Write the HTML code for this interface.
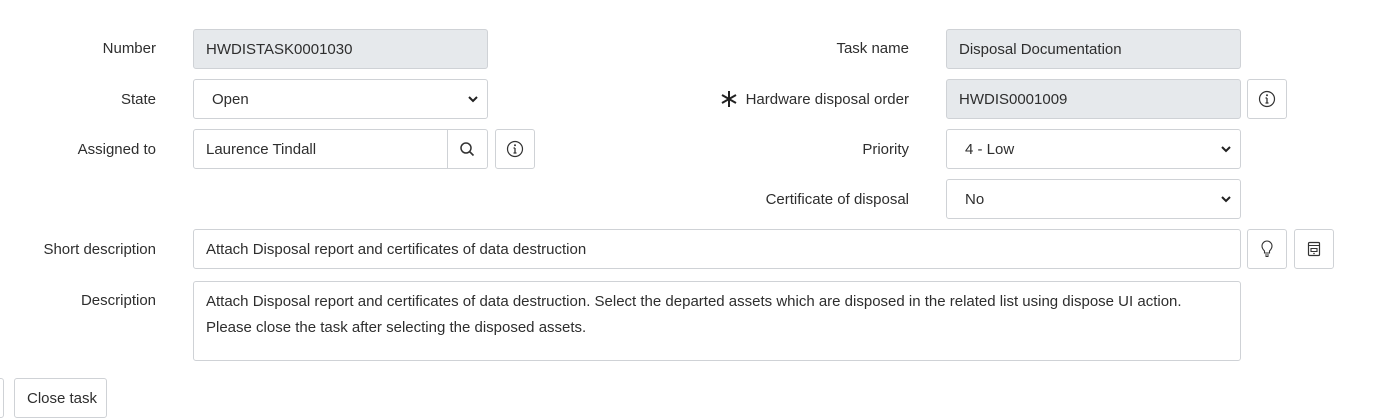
<!DOCTYPE html>
<html><head><meta charset="utf-8"><style>
body{margin:0;width:1380px;height:404px;overflow:hidden;background:#fff;font-family:"Liberation Sans",sans-serif;font-size:15px;color:#2e2e2e;position:relative}
.l{position:absolute;text-align:right;line-height:20px;margin-top:1px}
.b{position:absolute;box-sizing:border-box;border:1px solid #cfd2d6;border-radius:3px;background:#fff;line-height:40px;padding-left:12px;white-space:nowrap}
.ro{background:#e6e9ec}
.ic{position:absolute;box-sizing:border-box;border:1px solid #cfd2d6;border-radius:3px;background:#fff;width:40px;height:40px;display:flex;align-items:center;justify-content:center}
.chev{position:absolute;right:8px;top:14px}
</style></head><body>
<div class="l" style="left:0;width:156px;top:38px">Number</div>
<div class="b ro" style="left:193px;top:29px;width:295px;height:40px">HWDISTASK0001030</div>
<div class="l" style="left:0;width:156px;top:89px">State</div>
<div class="b" style="left:193px;top:79px;width:295px;height:40px;padding-left:18px">Open<svg class="chev" width="12" height="10" viewBox="0 0 12 10"><path d="M2 3l4 4 4-4" fill="none" stroke="#222" stroke-width="2"/></svg></div>
<div class="l" style="left:0;width:156px;top:139px">Assigned to</div>
<div class="b" style="left:193px;top:129px;width:295px;height:40px">Laurence Tindall</div>
<div style="position:absolute;left:447px;top:130px;width:1px;height:38px;background:#cfd2d6"></div>
<svg style="position:absolute;left:459px;top:141px" width="17" height="17" viewBox="0 0 17 17"><circle cx="7" cy="7" r="5" fill="none" stroke="#333" stroke-width="1.5"/><path d="M10.5 10.5l4 4" stroke="#333" stroke-width="1.6"/></svg>
<div class="ic" style="left:495px;top:129px"><svg width="18" height="18" viewBox="0 0 18 18"><circle cx="9" cy="9" r="7.5" fill="none" stroke="#333" stroke-width="1.2"/><path d="M9 8v5M7.5 8H9M7.5 13h3" stroke="#333" stroke-width="1.3" fill="none"/><circle cx="9" cy="5.3" r="1" fill="#333"/></svg></div>

<div class="l" style="left:700px;width:209px;top:38px">Task name</div>
<div class="b ro" style="left:946px;top:29px;width:295px;height:40px">Disposal Documentation</div>
<div class="l" style="left:600px;width:309px;top:89px"><svg width="18" height="18" viewBox="0 0 18 18" style="vertical-align:-4px;margin-right:8px"><path d="M9 1v16M2 5l14 8M16 5L2 13" stroke="#222" stroke-width="2"/></svg>Hardware disposal order</div>
<div class="b ro" style="left:946px;top:79px;width:295px;height:40px">HWDIS0001009</div>
<div class="ic" style="left:1247px;top:79px"><svg width="18" height="18" viewBox="0 0 18 18"><circle cx="9" cy="9" r="7.5" fill="none" stroke="#333" stroke-width="1.2"/><path d="M9 8v5M7.5 8H9M7.5 13h3" stroke="#333" stroke-width="1.3" fill="none"/><circle cx="9" cy="5.3" r="1" fill="#333"/></svg></div>
<div class="l" style="left:700px;width:209px;top:139px">Priority</div>
<div class="b" style="left:946px;top:129px;width:295px;height:40px;padding-left:18px">4 - Low<svg class="chev" width="12" height="10" viewBox="0 0 12 10"><path d="M2 3l4 4 4-4" fill="none" stroke="#222" stroke-width="2"/></svg></div>
<div class="l" style="left:700px;width:209px;top:189px">Certificate of disposal</div>
<div class="b" style="left:946px;top:179px;width:295px;height:40px;padding-left:18px">No<svg class="chev" width="12" height="10" viewBox="0 0 12 10"><path d="M2 3l4 4 4-4" fill="none" stroke="#222" stroke-width="2"/></svg></div>

<div class="l" style="left:0;width:156px;top:239px">Short description</div>
<div class="b" style="left:193px;top:229px;width:1048px;height:40px">Attach Disposal report and certificates of data destruction</div>
<div class="ic" style="left:1247px;top:229px"><svg width="14" height="18" viewBox="0 0 14 18"><path d="M4.5 11C3 9.5 2 8 2 6a5 5 0 0 1 10 0c0 2-1 3.5-2.5 5v2h-5z" fill="none" stroke="#333" stroke-width="1.1"/><path d="M5 15h4M5.5 16.5h3" stroke="#333"/></svg></div>
<div class="ic" style="left:1294px;top:229px"><svg width="14" height="16" viewBox="0 0 14 16"><rect x="1.5" y="1.5" width="11" height="13" rx="1" fill="none" stroke="#333" stroke-width="1.2"/><path d="M1.5 4.5h11M4 7.5h6v3H4z" fill="none" stroke="#333" stroke-width="1.1"/><circle cx="7" cy="12.5" r=".8" fill="#333"/></svg></div>

<div class="l" style="left:0;width:156px;top:290px">Description</div>
<div class="b" style="left:193px;top:281px;width:1048px;height:80px;line-height:26px;padding-top:7px">Attach Disposal report and certificates of data destruction. Select the departed assets which are disposed in the related list using dispose UI action.<br>Please close the task after selecting the disposed assets.</div>

<div class="b" style="left:-40px;top:378px;width:44px;height:40px"></div>
<div class="b" style="left:14px;top:378px;width:93px;height:40px;line-height:40px">Close task</div>
</body></html>
